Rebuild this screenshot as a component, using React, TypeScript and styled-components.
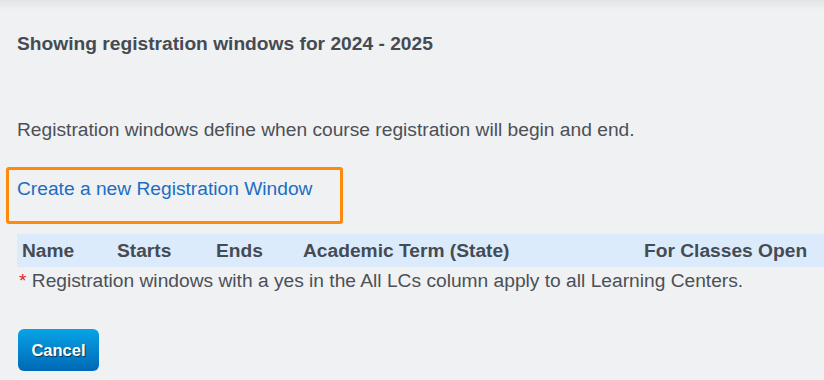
import styled, { createGlobalStyle } from "styled-components";

const GlobalStyle = createGlobalStyle`
  html, body {
    margin: 0;
    padding: 0;
    background: #f0f1f3;
    overflow: hidden;
  }
  body {
    font-family: "Liberation Sans", Arial, sans-serif;
    font-size: 19.2px;
    line-height: 22px;
    color: #4b5057;
  }
`;

const TopShadow = styled.div`
  height: 10px;
  background: linear-gradient(#e3e4e6, #f0f1f3);
`;

const Page = styled.main`
  padding-left: 17px;
`;

const Heading = styled.h4`
  margin: 23px 0 0;
  font-size: 19.2px;
  line-height: 22px;
  font-weight: bold;
  color: #454b53;
`;

const Description = styled.p`
  margin: 64px 0 0;
`;

const LinkBox = styled.div`
  box-sizing: border-box;
  margin: 26px 0 0 -11px;
  width: 337px;
  height: 57px;
  padding: 8px 0 0 8px;
  border: 3px solid #fd8a0c;
  border-radius: 3px;
`;

const CreateLink = styled.a`
  color: #1b6ec2;
  text-decoration: none;
  cursor: pointer;
`;

const TableWrap = styled.div`
  margin-top: 10px;
  overflow: hidden;
`;

const HeaderRow = styled.div`
  display: grid;
  grid-template-columns: 95px 99px 87px 341px 1fr;
  height: 33px;
  align-items: center;
  background: #dcebfc;
`;

const HeaderCell = styled.div`
  padding-left: 5px;
  font-weight: bold;
  color: #454b53;
  white-space: nowrap;
`;

const Footnote = styled.p`
  margin: 3px 0 0 2px;
`;

const Asterisk = styled.span`
  color: #e8202a;
`;

const CancelButton = styled.button`
  display: flex;
  align-items: center;
  justify-content: center;
  margin-top: 37px;
  margin-left: 1px;
  width: 81px;
  height: 42px;
  padding: 0;
  border: none;
  border-radius: 6px;
  background: linear-gradient(#07a3e6, #0068b5);
  color: #ffffff;
  font-family: "Liberation Sans", Arial, sans-serif;
  font-size: 16.5px;
  font-weight: bold;
  text-shadow: 1px 1px 1px rgba(0, 0, 0, 0.55);
  cursor: pointer;
`;

const columns = ["Name", "Starts", "Ends", "Academic Term (State)", "For Classes Open"];

export default function App() {
  return (
    <>
      <GlobalStyle />
      <TopShadow />
      <Page>
        <Heading>Showing registration windows for 2024 - 2025</Heading>
        <Description>
          Registration windows define when course registration will begin and end.
        </Description>
        <LinkBox>
          <CreateLink>Create a new Registration Window</CreateLink>
        </LinkBox>
        <TableWrap>
          <HeaderRow>
            {columns.map((c) => (
              <HeaderCell key={c}>{c}</HeaderCell>
            ))}
          </HeaderRow>
        </TableWrap>
        <Footnote>
          <Asterisk>*</Asterisk> Registration windows with a yes in the All LCs column apply to
          all Learning Centers.
        </Footnote>
        <CancelButton>Cancel</CancelButton>
      </Page>
    </>
  );
}
